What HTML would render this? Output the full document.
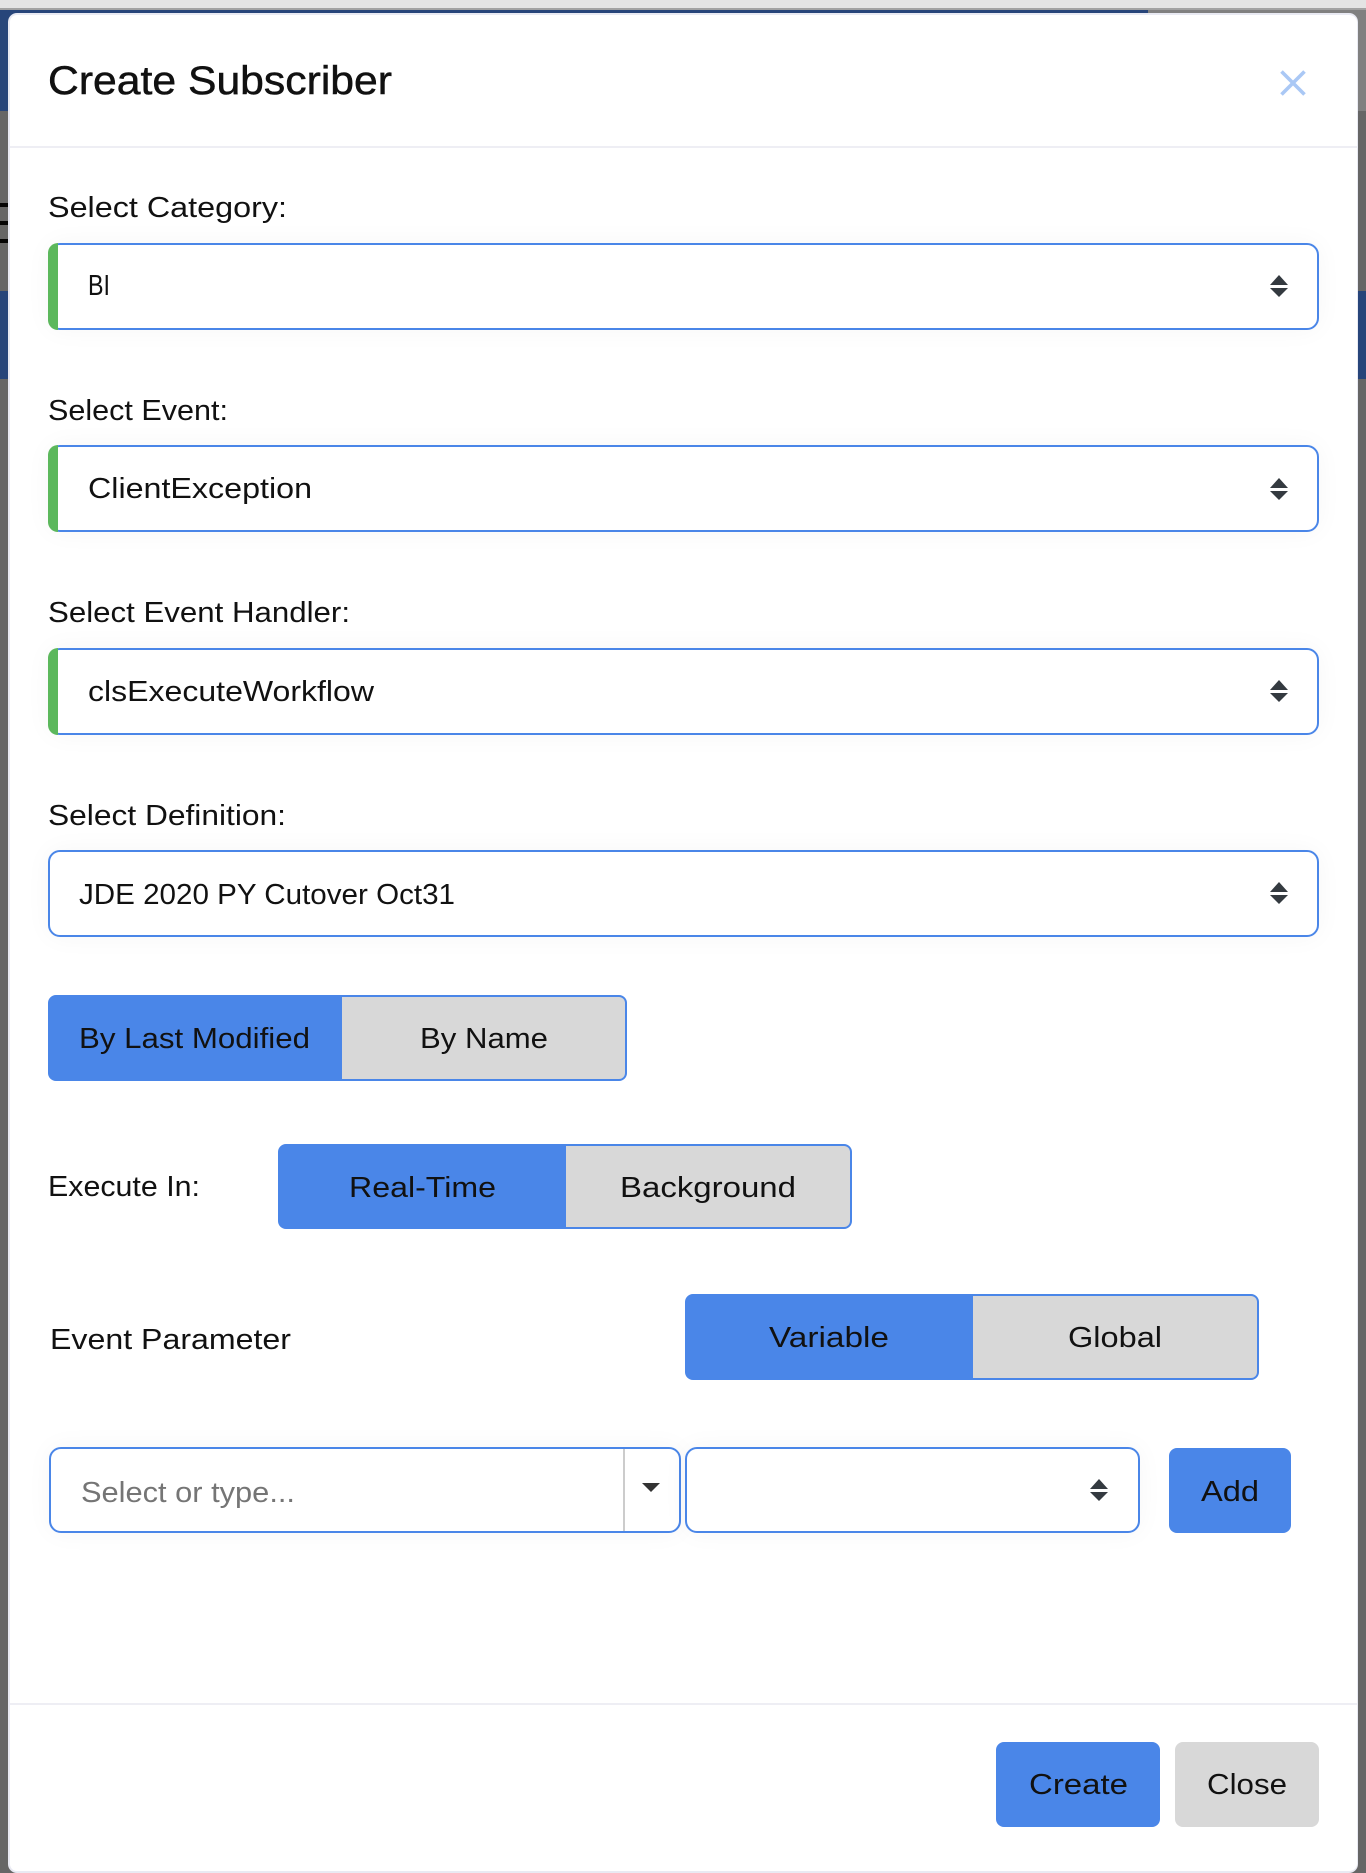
<!DOCTYPE html>
<html>
<head>
<meta charset="utf-8">
<title>Create Subscriber</title>
<style>
html,body{margin:0;padding:0;width:1366px;height:1856px;overflow:hidden;background:#666;}
.a{position:absolute;box-sizing:border-box;}
.sel{left:48px;width:1271px;height:87px;border:2px solid #4a86e8;border-radius:12px;background:#fff;box-shadow:0 0 26px rgba(0,0,0,.04);}
.green{left:48px;width:10px;height:87px;background:#5cb85c;border-radius:12px 0 0 12px;}
.seg{background:#4a86e8;border-radius:8px;}
.off{background:#d8d8d8;}
svg{position:absolute;left:0;top:0;}
text{font-family:"Liberation Sans",sans-serif;font-size:29px;fill:#111;}
</style>
</head>
<body>
<!-- page behind -->
<div class="a" style="left:0;top:0;width:1366px;height:8px;background:#e4e4e4"></div>
<div class="a" style="left:0;top:8px;width:1366px;height:2px;background:#a2a2a2"></div>
<div class="a" style="left:0;top:10px;width:1148px;height:101px;background:#27457a"></div>
<div class="a" style="left:1148px;top:10px;width:218px;height:101px;background:#808080"></div>
<div class="a" style="left:0;top:291px;width:1366px;height:88px;background:#27457a"></div>
<div class="a" style="left:0;top:203px;width:8px;height:4px;background:#050505"></div>
<div class="a" style="left:0;top:221px;width:8px;height:4px;background:#050505"></div>
<div class="a" style="left:0;top:239px;width:8px;height:4px;background:#050505"></div>

<!-- modal -->
<div class="a" style="left:8px;top:13px;width:1350px;height:1860px;background:#fff;border:2px solid #e9eaf3;border-right-width:1px;border-radius:9px"></div>
<div class="a" style="left:10px;top:146px;width:1347px;height:2px;background:#eeeef4"></div>
<div class="a" style="left:10px;top:1703px;width:1347px;height:2px;background:#eeeef4"></div>

<!-- selects -->
<div class="a sel" style="top:243px"></div><div class="a green" style="top:243px"></div>
<div class="a sel" style="top:445px"></div><div class="a green" style="top:445px"></div>
<div class="a sel" style="top:648px"></div><div class="a green" style="top:648px"></div>
<div class="a sel" style="top:850px"></div>

<!-- By last modified -->
<div class="a seg" style="left:48px;top:995px;width:579px;height:86px"></div>
<div class="a off" style="left:342px;top:997px;width:283px;height:82px;border-radius:0 6px 6px 0"></div>
<!-- Execute -->
<div class="a seg" style="left:278px;top:1144px;width:574px;height:85px"></div>
<div class="a off" style="left:566px;top:1146px;width:284px;height:81px;border-radius:0 6px 6px 0"></div>
<!-- Variable -->
<div class="a seg" style="left:685px;top:1294px;width:574px;height:86px"></div>
<div class="a off" style="left:973px;top:1296px;width:284px;height:82px;border-radius:0 6px 6px 0"></div>

<!-- combo row -->
<div class="a" style="left:49px;top:1447px;width:632px;height:86px;border:2px solid #4a86e8;border-radius:12px;background:#fff;box-shadow:0 0 26px rgba(0,0,0,.04)"></div>
<div class="a" style="left:623px;top:1449px;width:2px;height:82px;background:#ccc"></div>
<div class="a" style="left:685px;top:1447px;width:455px;height:86px;border:2px solid #4a86e8;border-radius:12px;background:#fff;box-shadow:0 0 26px rgba(0,0,0,.04)"></div>
<div class="a seg" style="left:1169px;top:1448px;width:122px;height:85px"></div>

<!-- footer buttons -->
<div class="a seg" style="left:996px;top:1742px;width:164px;height:85px"></div>
<div class="a off" style="left:1175px;top:1742px;width:144px;height:85px;border-radius:8px"></div>

<svg width="1366" height="1856" viewBox="0 0 1366 1856" xmlns="http://www.w3.org/2000/svg">
  <text x="48" y="94" textLength="344" lengthAdjust="spacingAndGlyphs" style="font-size:40px;stroke:#111;stroke-width:.5px">Create Subscriber</text>
  <path d="M1281.500 71.500L1304.500 94.500M1304.500 71.500L1281.500 94.500" stroke="#aac8f5" stroke-width="3.600" fill="none"/>

  <text x="48" y="217" textLength="239" lengthAdjust="spacingAndGlyphs">Select Category:</text>
  <text x="88" y="295" textLength="22" lengthAdjust="spacingAndGlyphs">BI</text>

  <text x="48" y="420" textLength="180" lengthAdjust="spacingAndGlyphs">Select Event:</text>
  <text x="88" y="498" textLength="224" lengthAdjust="spacingAndGlyphs">ClientException</text>

  <text x="48" y="622" textLength="302" lengthAdjust="spacingAndGlyphs">Select Event Handler:</text>
  <text x="88" y="701" textLength="286" lengthAdjust="spacingAndGlyphs">clsExecuteWorkflow</text>

  <text x="48" y="825" textLength="238" lengthAdjust="spacingAndGlyphs">Select Definition:</text>
  <text x="79" y="904" textLength="376" lengthAdjust="spacingAndGlyphs">JDE 2020 PY Cutover Oct31</text>

  <g fill="#343a40">
    <path d="M1279 275L1288 285L1270 285Z"/><path d="M1270 288L1288 288L1279 297Z"/>
    <path d="M1279 478L1288 488L1270 488Z"/><path d="M1270 491L1288 491L1279 500Z"/>
    <path d="M1279 680L1288 690L1270 690Z"/><path d="M1270 693L1288 693L1279 702Z"/>
    <path d="M1279 882L1288 892L1270 892Z"/><path d="M1270 895L1288 895L1279 904Z"/>
    <path d="M1099 1479L1108 1489L1090 1489Z"/><path d="M1090 1492L1108 1492L1099 1501Z"/>
  </g>

  <text x="79" y="1048" textLength="231" lengthAdjust="spacingAndGlyphs">By Last Modified</text>
  <text x="420" y="1048" textLength="128" lengthAdjust="spacingAndGlyphs">By Name</text>

  <text x="48" y="1196" textLength="152" lengthAdjust="spacingAndGlyphs">Execute In:</text>
  <text x="349" y="1197" textLength="147" lengthAdjust="spacingAndGlyphs">Real-Time</text>
  <text x="620" y="1197" textLength="176" lengthAdjust="spacingAndGlyphs">Background</text>

  <text x="50" y="1349" textLength="241" lengthAdjust="spacingAndGlyphs">Event Parameter</text>
  <text x="769" y="1347" textLength="120" lengthAdjust="spacingAndGlyphs">Variable</text>
  <text x="1068" y="1347" textLength="94" lengthAdjust="spacingAndGlyphs">Global</text>

  <text x="81" y="1502" textLength="214" lengthAdjust="spacingAndGlyphs" style="fill:#757575">Select or type...</text>
  <path d="M642 1483L660 1483L651 1492Z" fill="#333"/>
  <text x="1201" y="1501" textLength="58" lengthAdjust="spacingAndGlyphs">Add</text>

  <text x="1029" y="1794" textLength="99" lengthAdjust="spacingAndGlyphs">Create</text>
  <text x="1207" y="1794" textLength="80" lengthAdjust="spacingAndGlyphs">Close</text>
</svg>
</body>
</html>
